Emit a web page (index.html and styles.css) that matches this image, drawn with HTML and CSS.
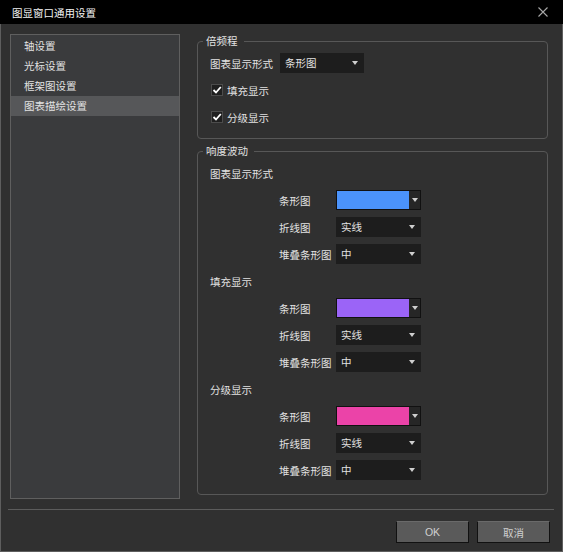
FILE: index.html
```html
<!DOCTYPE html>
<html lang="zh-CN">

<head>
    <meta charset="UTF-8">
    <title>图显窗口通用设置</title>
    <link rel="stylesheet" href="styles.css">
</head>

<body>
    <div class="window">
        <div class="titlebar">
            <span class="title">图显窗口通用设置</span>
            <svg class="close" width="10" height="10" viewBox="0 0 10 10">
                <path d="M0.5 0.5 L9.5 9.5 M9.5 0.5 L0.5 9.5" stroke="#a8a8a8" stroke-width="1.1" fill="none" />
            </svg>
        </div>

        <div class="main">
            <ul class="sidebar">
                <li>轴设置</li>
                <li>光标设置</li>
                <li>框架图设置</li>
                <li class="active">图表描绘设置</li>
            </ul>

            <div class="panel">
                <fieldset class="group group-octave">
                    <legend>倍频程</legend>
                    <div class="row">
                        <span class="label-wide">图表显示形式</span>
                        <div class="select select-short">条形图<span class="arrow"></span></div>
                    </div>
                    <div class="row">
                        <span class="checkbox"><svg width="10" height="10" viewBox="0 0 10 10"><path d="M1.5 5 L4 7.5 L8.8 2" stroke="#fff" stroke-width="1.8" fill="none" /></svg></span>
                        <span>填充显示</span>
                    </div>
                    <div class="row">
                        <span class="checkbox"><svg width="10" height="10" viewBox="0 0 10 10"><path d="M1.5 5 L4 7.5 L8.8 2" stroke="#fff" stroke-width="1.8" fill="none" /></svg></span>
                        <span>分级显示</span>
                    </div>
                </fieldset>

                <fieldset class="group group-loud">
                    <legend>响度波动</legend>

                    <div class="row">图表显示形式</div>
                    <div class="row sub">
                        <span class="label">条形图</span>
                        <div class="swatch"><span class="fill" style="background:#4b93fb"></span><span class="arrow"></span></div>
                    </div>
                    <div class="row sub">
                        <span class="label">折线图</span>
                        <div class="select">实线<span class="arrow"></span></div>
                    </div>
                    <div class="row sub">
                        <span class="label">堆叠条形图</span>
                        <div class="select">中<span class="arrow"></span></div>
                    </div>

                    <div class="row">填充显示</div>
                    <div class="row sub">
                        <span class="label">条形图</span>
                        <div class="swatch"><span class="fill" style="background:#9b64f7"></span><span class="arrow"></span></div>
                    </div>
                    <div class="row sub">
                        <span class="label">折线图</span>
                        <div class="select">实线<span class="arrow"></span></div>
                    </div>
                    <div class="row sub">
                        <span class="label">堆叠条形图</span>
                        <div class="select">中<span class="arrow"></span></div>
                    </div>

                    <div class="row">分级显示</div>
                    <div class="row sub">
                        <span class="label">条形图</span>
                        <div class="swatch"><span class="fill" style="background:#eb43a8"></span><span class="arrow"></span></div>
                    </div>
                    <div class="row sub">
                        <span class="label">折线图</span>
                        <div class="select">实线<span class="arrow"></span></div>
                    </div>
                    <div class="row sub">
                        <span class="label">堆叠条形图</span>
                        <div class="select">中<span class="arrow"></span></div>
                    </div>
                </fieldset>
            </div>
        </div>

        <div class="separator"></div>

        <div class="footer">
            <button class="btn">OK</button>
            <button class="btn">取消</button>
        </div>
    </div>
</body>

</html>
```

FILE: styles.css
```css
body {
    margin: 0;
    background-color: #303030;
    font-family: 'Liberation Sans', 'Noto Sans CJK SC', sans-serif;
    font-size: 10.5px;
    color: #e2e2e2;
}

.window {
    width: 563px;
    height: 552px;
    box-sizing: border-box;
    border: 1px solid #5e5e5e;
    border-top: none;
    display: flex;
    flex-direction: column;
}

.titlebar {
    height: 24px;
    background-color: #000;
    display: flex;
    align-items: center;
    justify-content: space-between;
    padding: 0 15px 0 12px;
    margin: 0 -1px;
    color: #f2f2f2;
}

.close {
    display: block;
}

.main {
    display: flex;
    gap: 17px;
    padding: 10px 14px 0 9px;
}

.sidebar {
    list-style: none;
    margin: 0;
    padding: 1px 0 0;
    width: 170px;
    height: 465px;
    box-sizing: border-box;
    background-color: #3a3b3d;
    border: 1px solid #5f5f5f;
}

.sidebar li {
    height: 20px;
    line-height: 20px;
    padding-left: 13px;
}

.sidebar li.active {
    background-color: #565759;
}

.panel {
    flex: 1;
    display: flex;
    flex-direction: column;
    gap: 5px;
}

.group {
    margin: 0;
    border: 1px solid #575757;
    border-radius: 4px;
    padding: 5px 12px 11px;
    display: flex;
    flex-direction: column;
    gap: 7px;
}

.group legend {
    margin-left: -7px;
    padding: 0 6px 0 3px;
    line-height: 14px;
}

.group-loud {
    padding-bottom: 14px;
}

.row {
    display: flex;
    align-items: center;
    height: 20px;
}

.label-wide {
    width: 70px;
}

.row .checkbox + span {
    margin-left: 4px;
}

.checkbox {
    width: 12px;
    height: 12px;
    box-sizing: border-box;
    margin-left: 1px;
    background-color: #1f1f1f;
    border: 1px solid #4c4c4c;
    display: flex;
    align-items: center;
    justify-content: center;
}

.checkbox svg {
    display: block;
}

.sub {
    padding-left: 69px;
}

.sub .label {
    width: 57px;
}

.select {
    position: relative;
    width: 85px;
    height: 20px;
    line-height: 20px;
    box-sizing: border-box;
    padding-left: 5px;
    background-color: #1d1d1d;
}

.select-short {
    width: 84px;
}

.arrow {
    position: absolute;
    right: 6px;
    top: 8px;
    width: 0;
    height: 0;
    border-left: 3.5px solid transparent;
    border-right: 3.5px solid transparent;
    border-top: 4px solid #cfcfcf;
}

.swatch {
    position: relative;
    width: 85px;
    height: 20px;
    box-sizing: border-box;
    border: 1px solid #111;
    background-color: #262626;
    display: flex;
}

.swatch .fill {
    width: 72px;
    height: 100%;
}

.swatch .arrow {
    right: 2px;
    top: 7px;
}

.separator {
    height: 1px;
    margin: 10px 8px 0 7px;
    background-color: #5c5c5c;
}

.footer {
    display: flex;
    justify-content: flex-end;
    gap: 8px;
    padding: 11px 12px 0 0;
}

.btn {
    width: 73px;
    height: 22px;
    padding: 0;
    background-color: #5a5a5a;
    color: #d0d0d0;
    font-family: 'Liberation Sans', 'Noto Sans CJK SC', sans-serif;
    font-size: 10.5px;
    border: 1px solid #111;
    border-top-color: #6a6a6a;
}
```
